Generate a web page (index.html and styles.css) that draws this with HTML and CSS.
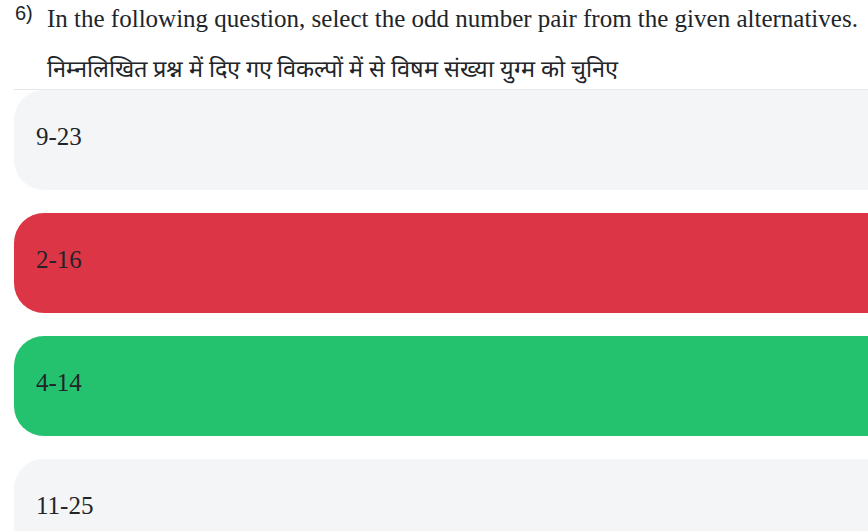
FILE: index.html
```html
<!DOCTYPE html>
<html lang="hi">
<head>
    <meta charset="UTF-8">
    <meta name="viewport" content="width=device-width, initial-scale=1.0">
    <title>Question 6</title>
    <link rel="stylesheet" href="styles.css">
</head>
<body>
    <div class="question">
        <div class="q-head">
            <span class="q-num">6)</span>
            <div class="q-text">
                <p class="q-en">In the following question, select the odd number pair from the given alternatives.</p>
                <p class="q-hi">निम्नलिखित प्रश्न में दिए गए विकल्पों में से विषम संख्या युग्म को चुनिए</p>
            </div>
        </div>

        <div class="options">
            <div class="option">9-23</div>
            <div class="option wrong">2-16</div>
            <div class="option right">4-14</div>
            <div class="option">11-25</div>
        </div>
    </div>
</body>
</html>
```

FILE: styles.css
```css
html { overflow: hidden; }
body { margin: 0; background: #fff; color: #212529; font-family: 'Liberation Serif', 'Times New Roman', serif; }
.question { width: 900px; padding-left: 14px; }
.q-head { display: flex; border-bottom: 1px solid #e5e7eb; }
.q-num { font-family: 'Liberation Sans', Arial, sans-serif; font-size: 20px; width: 32px; padding-left: 1px; line-height: 1; padding-top: 3px; }
.q-text p { margin: 0; white-space: nowrap; }
.q-en { font-size: 25px; line-height: 38px; }
.q-hi { font-size: 23.5px; line-height: 40px; padding-top: 11px; }
.options { display: flex; flex-direction: column; gap: 23px; }
.option { height: 100px; box-sizing: border-box; padding: 32px 22px 0; font-size: 25px; line-height: 30px; background: #f4f5f7; border-radius: 30px 0 0 30px; }
.option.wrong { background: #dc3545; }
.option.right { background: #24c26f; }
```
